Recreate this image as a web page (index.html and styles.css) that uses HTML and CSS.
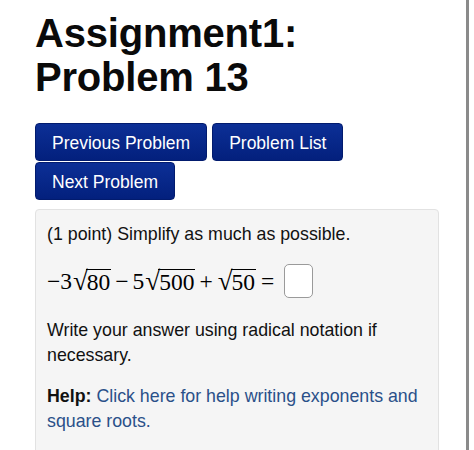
FILE: index.html
```html
<!DOCTYPE html>
<html lang="en">
<head>
<meta charset="utf-8">
<title>Assignment1: Problem 13</title>
<link rel="stylesheet" href="styles.css">
</head>
<body>
<div class="frame">
  <main class="page">
    <h1 class="title">Assignment1:<br>Problem 13</h1>
    <nav class="navs">
      <a class="btn" href="#">Previous Problem</a>
      <a class="btn" href="#">Problem List</a>
      <a class="btn" href="#">Next Problem</a>
    </nav>
    <section class="panel">
      <p class="txt">(1 point) Simplify as much as possible.</p>
      <div class="eq">
        <span class="mo">&minus;</span><span class="mn">3</span><span class="sqrt"><span class="rad">&radic;</span><span class="rc">80</span></span><span class="mo bin">&minus;</span><span class="mn">5</span><span class="sqrt"><span class="rad">&radic;</span><span class="rc">500</span></span><span class="mo bin">+</span><span class="sqrt"><span class="rad">&radic;</span><span class="rc">50</span></span><span class="mo rel">=</span><span class="ans"></span>
      </div>
      <p class="txt gap">Write your answer using radical notation if necessary.</p>
      <p class="txt gap2"><b>Help:</b> <a class="link" href="#">Click here for help writing exponents and square roots.</a></p>
    </section>
  </main>
  <div class="rule"></div>
</div>
</body>
</html>
```

FILE: styles.css
```css
html, body {
  margin: 0;
  padding: 0;
  background: #ffffff;
}
body {
  font-family: "Liberation Sans", Arial, Helvetica, sans-serif;
  color: #111111;
  height: 450px;
  overflow: hidden;
}
.frame {
  display: flex;
  height: 450px;
}
.page {
  width: 404px;
  padding-left: 35px;
  padding-right: 27px;
}
.rule {
  width: 3px;
  background: #8a8a8a;
  height: 450px;
}
.title {
  margin: 11px 0 0;
  font-size: 40px;
  line-height: 44px;
  font-weight: bold;
  color: #0a0a0a;
  letter-spacing: -0.2px;
}
.navs {
  display: flex;
  flex-wrap: wrap;
  gap: 1px 5px;
  margin-top: 24px;
}
.btn {
  display: block;
  height: 38px;
  line-height: 38px;
  padding: 0 16px;
  box-sizing: border-box;
  font-size: 17.5px;
  color: #ffffff;
  text-decoration: none;
  border-radius: 4px;
  background: linear-gradient(#0c2f96, #03207d);
  border: 1px solid #021b6e;
}
.panel {
  margin-top: 9px;
  background: #f5f5f5;
  border: 1px solid #e2e2e2;
  border-radius: 4px;
  padding: 12px 11px 30px;
  height: 300px;
  box-sizing: border-box;
}
.txt {
  margin: 0;
  font-size: 17.8px;
  line-height: 25px;
}
.gap { margin-top: 20px; }
.gap2 { margin-top: 16px; }
.link {
  color: #2a5089;
  text-decoration: none;
}
.eq {
  display: flex;
  align-items: center;
  margin-top: 17px;
  height: 34px;
  font-family: "Liberation Serif", "Times New Roman", serif;
  font-size: 23.5px;
  color: #000;
}
.mo { display: inline-block; }
.bin { margin: 0 4px; }
.rel { margin: 0 4px 0 5px; }
.sqrt {
  display: inline-flex;
  align-items: flex-start;
  margin-left: 1px;
}
.rad {
  display: inline-block;
  line-height: 1;
  font-size: 27px;
  margin-right: -2px;
}
.rc {
  display: inline-block;
  line-height: 1;
  border-top: 1.5px solid #000;
  padding: 1px 1px 0 1px;
  margin-top: 1px;
}
.ans {
  display: inline-block;
  width: 29px;
  height: 34px;
  box-sizing: border-box;
  border: 1.5px solid #9a9a9a;
  border-radius: 5px;
  background: #ffffff;
  margin-left: 6px;
}
```
